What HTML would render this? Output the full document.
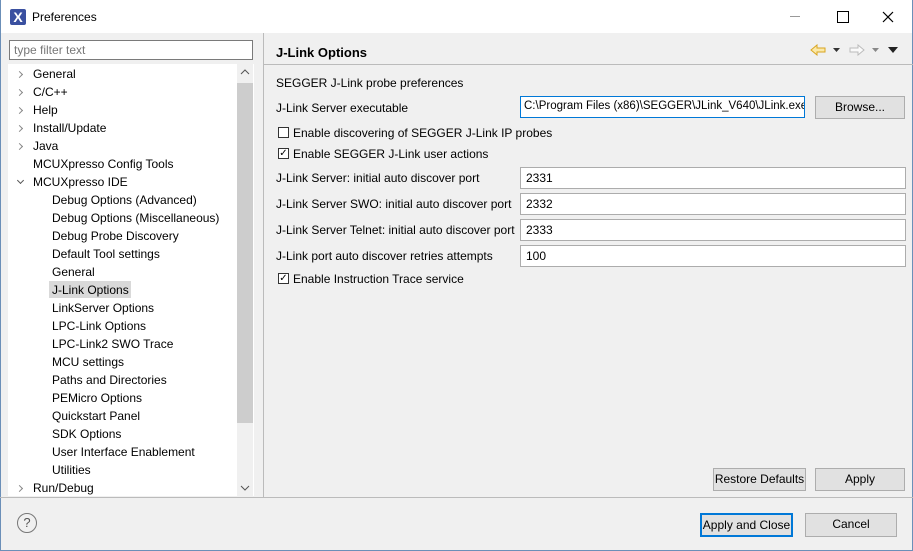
<!DOCTYPE html>
<html><head><style>
body{margin:0;width:913px;height:551px;overflow:hidden;background:#f0f0f0;font-family:"Liberation Sans",sans-serif;font-size:12px;color:#000;position:relative}
.a{position:absolute;white-space:nowrap}
.inp{position:absolute;background:#fff;border:1px solid #acacac;box-sizing:border-box;height:22px;padding:3px 5px;white-space:nowrap;overflow:hidden}
.btn{position:absolute;background:#e1e1e1;border:1px solid #adadad;box-sizing:border-box;text-align:center;line-height:21px;height:23px}
.cb{position:absolute;width:11px;height:11px;border:1px solid #333;background:#fff;box-sizing:border-box}
.t{position:absolute;white-space:nowrap;font-size:12px}
.chr{position:absolute;width:4px;height:4px;border-right:1px solid #888;border-bottom:1px solid #888;transform:rotate(-45deg)}
.chd{position:absolute;width:4px;height:4px;border-right:1px solid #555;border-bottom:1px solid #555;transform:rotate(45deg)}
</style></head><body>
<div class="a" style="left:0;top:0;width:913px;height:33px;background:#fff"></div>
<div class="a" style="left:0;top:0;width:1px;height:551px;background:#6b8fb8"></div>
<div class="a" style="left:912px;top:0;width:1px;height:551px;background:#6b8fb8"></div>
<div class="a" style="left:0;top:550px;width:913px;height:1px;background:#6b8fb8"></div>
<div class="a" style="left:10px;top:9px;width:16px;height:16px;background:#3a50a0;border-radius:2px;color:#fff;font-weight:bold;font-size:14px;line-height:16px;text-align:center">X</div>
<div class="a" style="left:32px;top:10px">Preferences</div>
<div class="a" style="left:790px;top:16px;width:10px;height:1px;background:#999"></div>
<div class="a" style="left:837px;top:11px;width:10px;height:10px;border:1px solid #000"></div>
<svg class="a" style="left:882px;top:11px" width="12" height="12"><path d="M1 1L11 11M11 1L1 11" stroke="#000" stroke-width="1.2"/></svg>
<!-- left -->
<div class="a" style="left:8px;top:64px;width:246px;height:432px;background:#fff"></div>
<div class="inp" style="left:9px;top:40px;width:244px;height:20px;padding:2px 4px;border-color:#7a7a7a;color:#777">type filter text</div>
<div class="a" style="left:237px;top:64px;width:16px;height:432px;background:#f0f0f0"></div>
<div class="a" style="left:237px;top:83px;width:16px;height:340px;background:#cdcdcd"></div>
<svg class="a" style="left:240px;top:69px" width="10" height="6"><path d="M1 5L5 1L9 5" stroke="#555" fill="none"/></svg>
<svg class="a" style="left:240px;top:485px" width="10" height="6"><path d="M1 1L5 5L9 1" stroke="#555" fill="none"/></svg>
<div class="a" style="left:49px;top:281px;width:82px;height:17px;background:#d9d9d9"></div>
<div id="tree"></div>
<!-- right -->
<div class="a" style="left:263px;top:33px;width:1px;height:464px;background:#bbb"></div>
<div class="a" style="left:264px;top:64px;width:649px;height:1px;background:#bbb"></div>
<div class="a" style="left:276px;top:45px;font-weight:bold;font-size:13px">J-Link Options</div>
<svg class="a" style="left:810px;top:44px" width="16" height="12"><path d="M1 6L7 1V4H15V8H7V11Z" fill="#fbe9a8" stroke="#d9a520"/></svg>
<svg class="a" style="left:833px;top:48px" width="7" height="4"><path d="M0 0H7L3.5 4Z" fill="#333"/></svg>
<svg class="a" style="left:849px;top:44px" width="16" height="12"><path d="M15 6L9 1V4H1V8H9V11Z" fill="#fafafa" stroke="#bbb"/></svg>
<svg class="a" style="left:872px;top:48px" width="7" height="4"><path d="M0 0H7L3.5 4Z" fill="#888"/></svg>
<svg class="a" style="left:888px;top:47px" width="10" height="6"><path d="M0 0H10L5 6Z" fill="#222"/></svg>
<div class="a" style="left:276px;top:76px">SEGGER J-Link probe preferences</div>
<div class="a" style="left:276px;top:101px">J-Link Server executable</div>
<div class="inp" style="left:520px;top:96px;width:285px;border-color:#0078d7;font-size:11.5px;padding:3px 3px">C:\Program Files (x86)\SEGGER\JLink_V640\JLink.exe</div>
<div class="btn" style="left:815px;top:96px;width:90px">Browse...</div>
<div class="cb" style="left:278px;top:127px"></div>
<div class="a" style="left:293px;top:126px">Enable discovering of SEGGER J-Link IP probes</div>
<div class="cb" style="left:278px;top:148px;font-size:10px;line-height:9px;text-align:center">✓</div>
<div class="a" style="left:293px;top:147px">Enable SEGGER J-Link user actions</div>
<div class="a" style="left:276px;top:171px">J-Link Server: initial auto discover port</div>
<div class="inp" style="left:520px;top:167px;width:386px">2331</div>
<div class="a" style="left:276px;top:197px">J-Link Server SWO: initial auto discover port</div>
<div class="inp" style="left:520px;top:193px;width:386px">2332</div>
<div class="a" style="left:276px;top:223px">J-Link Server Telnet: initial auto discover port</div>
<div class="inp" style="left:520px;top:219px;width:386px">2333</div>
<div class="a" style="left:276px;top:249px">J-Link port auto discover retries attempts</div>
<div class="inp" style="left:520px;top:245px;width:386px">100</div>
<div class="cb" style="left:278px;top:273px;font-size:10px;line-height:9px;text-align:center">✓</div>
<div class="a" style="left:293px;top:272px">Enable Instruction Trace service</div>
<div class="btn" style="left:713px;top:468px;width:93px">Restore Defaults</div>
<div class="btn" style="left:815px;top:468px;width:90px">Apply</div>
<div class="a" style="left:0;top:497px;width:913px;height:1px;background:#bbb"></div>
<div class="a" style="left:17px;top:513px;width:18px;height:18px;border:1px solid #777;border-radius:50%;text-align:center;line-height:18px;color:#555;font-size:13px">?</div>
<div class="btn" style="left:700px;top:513px;width:93px;height:24px;border:2px solid #0078d7;line-height:20px">Apply and Close</div>
<div class="btn" style="left:805px;top:513px;width:92px;height:24px">Cancel</div>
<script>
var items=[["General",0,1],["C/C++",0,1],["Help",0,1],["Install/Update",0,1],["Java",0,1],["MCUXpresso Config Tools",0,0],["MCUXpresso IDE",0,2],["Debug Options (Advanced)",1],["Debug Options (Miscellaneous)",1],["Debug Probe Discovery",1],["Default Tool settings",1],["General",1],["J-Link Options",1],["LinkServer Options",1],["LPC-Link Options",1],["LPC-Link2 SWO Trace",1],["MCU settings",1],["Paths and Directories",1],["PEMicro Options",1],["Quickstart Panel",1],["SDK Options",1],["User Interface Enablement",1],["Utilities",1],["Run/Debug",0,1]];
var h="";items.forEach(function(it,i){var y=67+i*18;h+='<div class="t" style="left:'+(it[1]?52:33)+'px;top:'+y+'px">'+it[0]+'</div>';if(it[2]==1)h+='<div class="chr" style="left:17px;top:'+(y+5)+'px"></div>';if(it[2]==2)h+='<div class="chd" style="left:18px;top:'+(y+3)+'px"></div>';});
document.getElementById("tree").outerHTML=h;
</script>
</body></html>
